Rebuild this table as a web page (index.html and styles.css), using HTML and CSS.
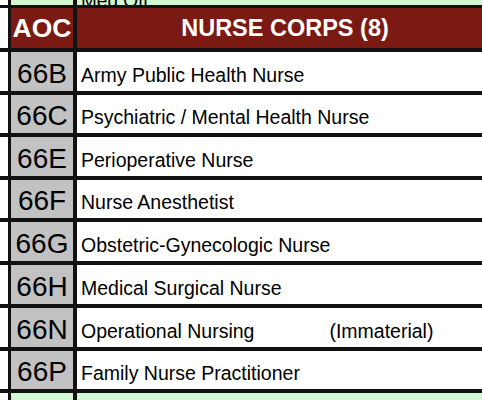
FILE: index.html
```html
<!DOCTYPE html>
<html>
<head>
<meta charset="utf-8">
<link rel="stylesheet" href="styles.css">
</head>
<body>
<div class="sheet">
  <div class="row r-top">
    <div class="edge"></div>
    <div class="code green"></div>
    <div class="desc green"><span class="cut">Med Off</span></div>
  </div>
  <div class="row r-head">
    <div class="edge"></div>
    <div class="code head">AOC</div>
    <div class="desc head title">NURSE CORPS (8)</div>
  </div>
  <div class="row h39"><div class="edge"></div><div class="code">66B</div><div class="desc">Army Public Health Nurse</div></div>
  <div class="row h38"><div class="edge"></div><div class="code">66C</div><div class="desc">Psychiatric / Mental Health Nurse</div></div>
  <div class="row h39"><div class="edge"></div><div class="code">66E</div><div class="desc">Perioperative Nurse</div></div>
  <div class="row h38"><div class="edge"></div><div class="code">66F</div><div class="desc">Nurse Anesthetist</div></div>
  <div class="row h39"><div class="edge"></div><div class="code">66G</div><div class="desc">Obstetric-Gynecologic Nurse</div></div>
  <div class="row h39"><div class="edge"></div><div class="code">66H</div><div class="desc">Medical Surgical Nurse</div></div>
  <div class="row h39"><div class="edge"></div><div class="code">66N</div><div class="desc">Operational Nursing<span class="note">(Immaterial)</span></div></div>
  <div class="row h38"><div class="edge"></div><div class="code">66P</div><div class="desc">Family Nurse Practitioner</div></div>
  <div class="row r-bottom">
    <div class="edge"></div>
    <div class="code green"></div>
    <div class="desc green"></div>
  </div>
</div>
</body>
</html>
```
FILE: styles.css
```css
html, body {
  margin: 0;
  padding: 0;
  background: #ffffff;
  overflow: hidden;
}
.sheet {
  width: 482px;
  height: 400px;
  font-family: "Liberation Sans", Arial, sans-serif;
  color: #000;
  display: flex;
  flex-direction: column;
}
.row {
  display: flex;
  flex: none;
  box-sizing: content-box;
  border-bottom: 4px solid #111;
}
.h39 { height: 39px; }
.h38 { height: 38px; }
.r-top {
  height: 5px;
  border-bottom-width: 3px;
  overflow: hidden;
}
.r-head { height: 40px; }
.r-bottom {
  height: 10px;
  border-bottom: none;
}
.edge {
  width: 8px;
  flex: none;
  background: #fff;
  border-right: 3px solid #111;
}
.code {
  width: 66px;
  flex: none;
  background: #c2c2c2;
  border-right: 4px solid #111;
  display: flex;
  align-items: center;
  justify-content: center;
  font-size: 28px;
  padding-top: 4px;
  box-sizing: border-box;
}
.desc {
  flex: 1;
  background: #fff;
  display: flex;
  align-items: center;
  padding-left: 4px;
  padding-top: 7px;
  font-size: 19.5px;
  white-space: nowrap;
}
.green { background: #d3f7d0; }
.head {
  background: #7b1913;
  color: #fff;
  font-weight: bold;
}
.code.head {
  font-size: 26.5px;
  padding-top: 1px;
}
.title {
  justify-content: center;
  font-size: 23.5px;
  padding-left: 11px;
  padding-top: 1px;
}
.cut {
  display: block;
  line-height: 18px;
  margin-top: -15px;
  align-self: flex-start;
  font-size: 19px;
}
.note {
  margin-left: 75px;
}
```
